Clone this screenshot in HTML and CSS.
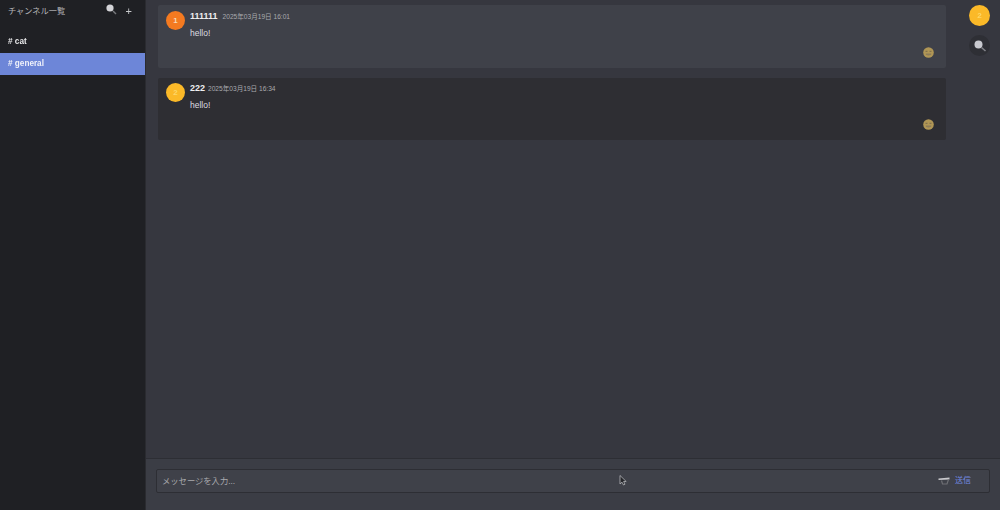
FILE: index.html
```html
<!DOCTYPE html>
<html lang="ja">
<head>
<meta charset="utf-8">
<title>chat</title>
<link rel="stylesheet" href="styles.css">
</head>
<body>
<div class="app">
  <aside class="sidebar">
    <div class="side-head">
      <span class="side-title">チャンネル一覧</span>
      <svg class="mag" width="12" height="14" viewBox="0 0 12 14"><circle cx="5" cy="5" r="3.6" fill="#d4d4d8"/><path d="M8 8l3 3" stroke="#77787c" stroke-width="1.4"/></svg>
      <span class="plus">+</span>
    </div>
    <div class="channel"># cat</div>
    <div class="channel active"># general</div>
  </aside>
  <main class="main">
    <div class="body">
      <div class="messages">
        <article class="msg first">
          <div class="avatar orange">1</div>
          <div class="content">
            <div class="meta"><span class="name">111111</span><span class="time">2025年03月19日 16:01</span></div>
            <div class="text">hello!</div>
          </div>
          <div class="emoji"><svg width="11" height="11" viewBox="0 0 11 11"><circle cx="5.5" cy="5.5" r="5.3" fill="#b09655"/><path d="M2.5 4.3h2M6.5 4.3h2" stroke="#7a6a4c" stroke-width="1"/><path d="M2.8 6.5h5.4v1.2q-2.7 1.6-5.4 0z" fill="#8d7c58"/></svg></div>
        </article>
        <article class="msg second">
          <div class="avatar yellow">2</div>
          <div class="content">
            <div class="meta"><span class="name">222</span><span class="time">2025年03月19日 16:34</span></div>
            <div class="text">hello!</div>
          </div>
          <div class="emoji"><svg width="11" height="11" viewBox="0 0 11 11"><circle cx="5.5" cy="5.5" r="5.3" fill="#b09655"/><path d="M2.5 4.3h2M6.5 4.3h2" stroke="#7a6a4c" stroke-width="1"/><path d="M2.8 6.5h5.4v1.2q-2.7 1.6-5.4 0z" fill="#8d7c58"/></svg></div>
        </article>
      </div>
      <div class="rail">
        <div class="rail-avatar">2</div>
        <div class="rail-search"><svg width="14" height="14" viewBox="0 0 14 14"><circle cx="5.5" cy="5.5" r="4" fill="#c9cad0"/><path d="M8.5 8.5l4 3.5" stroke="#85868c" stroke-width="1.5"/></svg></div>
      </div>
    </div>
    <footer class="composer">
      <div class="inputbox">
        <span class="placeholder">メッセージを入力...</span>
        <svg class="clip" width="12" height="9" viewBox="0 0 12 9"><path d="M0.5 2.5L11.5 1.5V3.5L0.5 4z" fill="#c8c8cc"/><path d="M3.5 4.5L4.5 8H9L10.5 3.5" fill="none" stroke="#6e6f74" stroke-width="1.2"/></svg>
        <span class="send">送信</span>
      </div>
    </footer>
  </main>
</div>
<svg class="cursor" width="8" height="11" viewBox="0 0 8 11"><path d="M1 0.5V9L3 7.2L4.5 10L6 9.2L4.6 6.5H7.2z" fill="#25262a" stroke="#b5b6ba" stroke-width="0.8"/></svg>
</body>
</html>
```
FILE: styles.css
```css
* { box-sizing: border-box; }
html, body { margin: 0; height: 100%; overflow: hidden; }
body { font-family: "Liberation Sans", "Noto Sans CJK JP", sans-serif; color: #e4e5e8; background: #36373f; }
.app { display: flex; height: 510px; filter: blur(0.5px); }
.sidebar { width: 146px; flex: none; background: #1f2024; border-right: 1px solid #2a2b30; }
.side-head { display: flex; align-items: center; height: 31px; padding: 0 13px 11px 8px; }
.side-title { font-size: 8.2px; color: #b4b5b9; flex: 1; }
.mag { margin-right: 9px; }
.plus { font-size: 11px; font-weight: 400; color: #c8c9cc; line-height: 1; padding-top: 3px; }
.channel { height: 22px; line-height: 21px; padding-left: 8px; font-size: 8.2px; font-weight: 700; color: #e8e8ea; }
.active { background: #6d86d8; color: #f0f2fa; }
.main { flex: 1; display: flex; flex-direction: column; min-width: 0; }
.body { flex: 1; display: flex; min-height: 0; }
.messages { flex: 1; padding: 5px 8px 0 12px; display: flex; flex-direction: column; gap: 10px; min-width: 0; }
.msg { position: relative; display: flex; gap: 5px; padding: 6px 8px 0 8px; border-radius: 2px; }
.first { height: 63px; background: #3f4149; }
.second { height: 62px; background: #2e2e33; padding-top: 5px; }
.second .meta { gap: 3px; }
.second .text { margin-top: 5px; }
.avatar { width: 19px; height: 19px; border-radius: 50%; flex: none; display: flex; align-items: center; justify-content: center; font-size: 8px; font-weight: 700; }
.orange { background: #f47a20; color: #f6d9b8; }
.yellow { background: #fbb928; color: #fdd768; }
.content { padding-top: 0; }
.meta { display: flex; align-items: baseline; gap: 5px; height: 12px; }
.name { font-size: 9px; font-weight: 700; color: #eeeef0; }
.time { font-size: 6.6px; color: #a9aaae; }
.text { margin-top: 5px; font-size: 8.5px; color: #dcdde0; }
.emoji { position: absolute; right: 12px; bottom: 10px; height: 11px; line-height: 0; }
.rail { width: 46px; flex: none; display: flex; flex-direction: column; align-items: flex-start; padding: 5px 0 0 15px; gap: 9px; }
.rail-avatar { width: 21px; height: 21px; border-radius: 50%; background: #fbb928; color: #fdd768; display: flex; align-items: center; justify-content: center; font-size: 8px; font-weight: 700; }
.rail-search { width: 21px; height: 21px; border-radius: 50%; background: #2e2f35; display: flex; align-items: center; justify-content: center; }
.composer { height: 52px; flex: none; background: #3b3d45; border-top: 1px solid #2d2e34; padding: 10px 10px 0 10px; }
.inputbox { height: 24px; display: flex; align-items: center; border: 1px solid #2d2e34; border-radius: 2px; background: #3f4149; padding: 0 18px 3px 5px; }
.placeholder { font-size: 8.3px; color: #a9aaae; flex: 1; }
.clip { margin-right: 5px; margin-top: 2px; }
.send { font-size: 8px; color: #7189e0; }
.cursor { position: absolute; left: 619px; top: 475px; }
```
